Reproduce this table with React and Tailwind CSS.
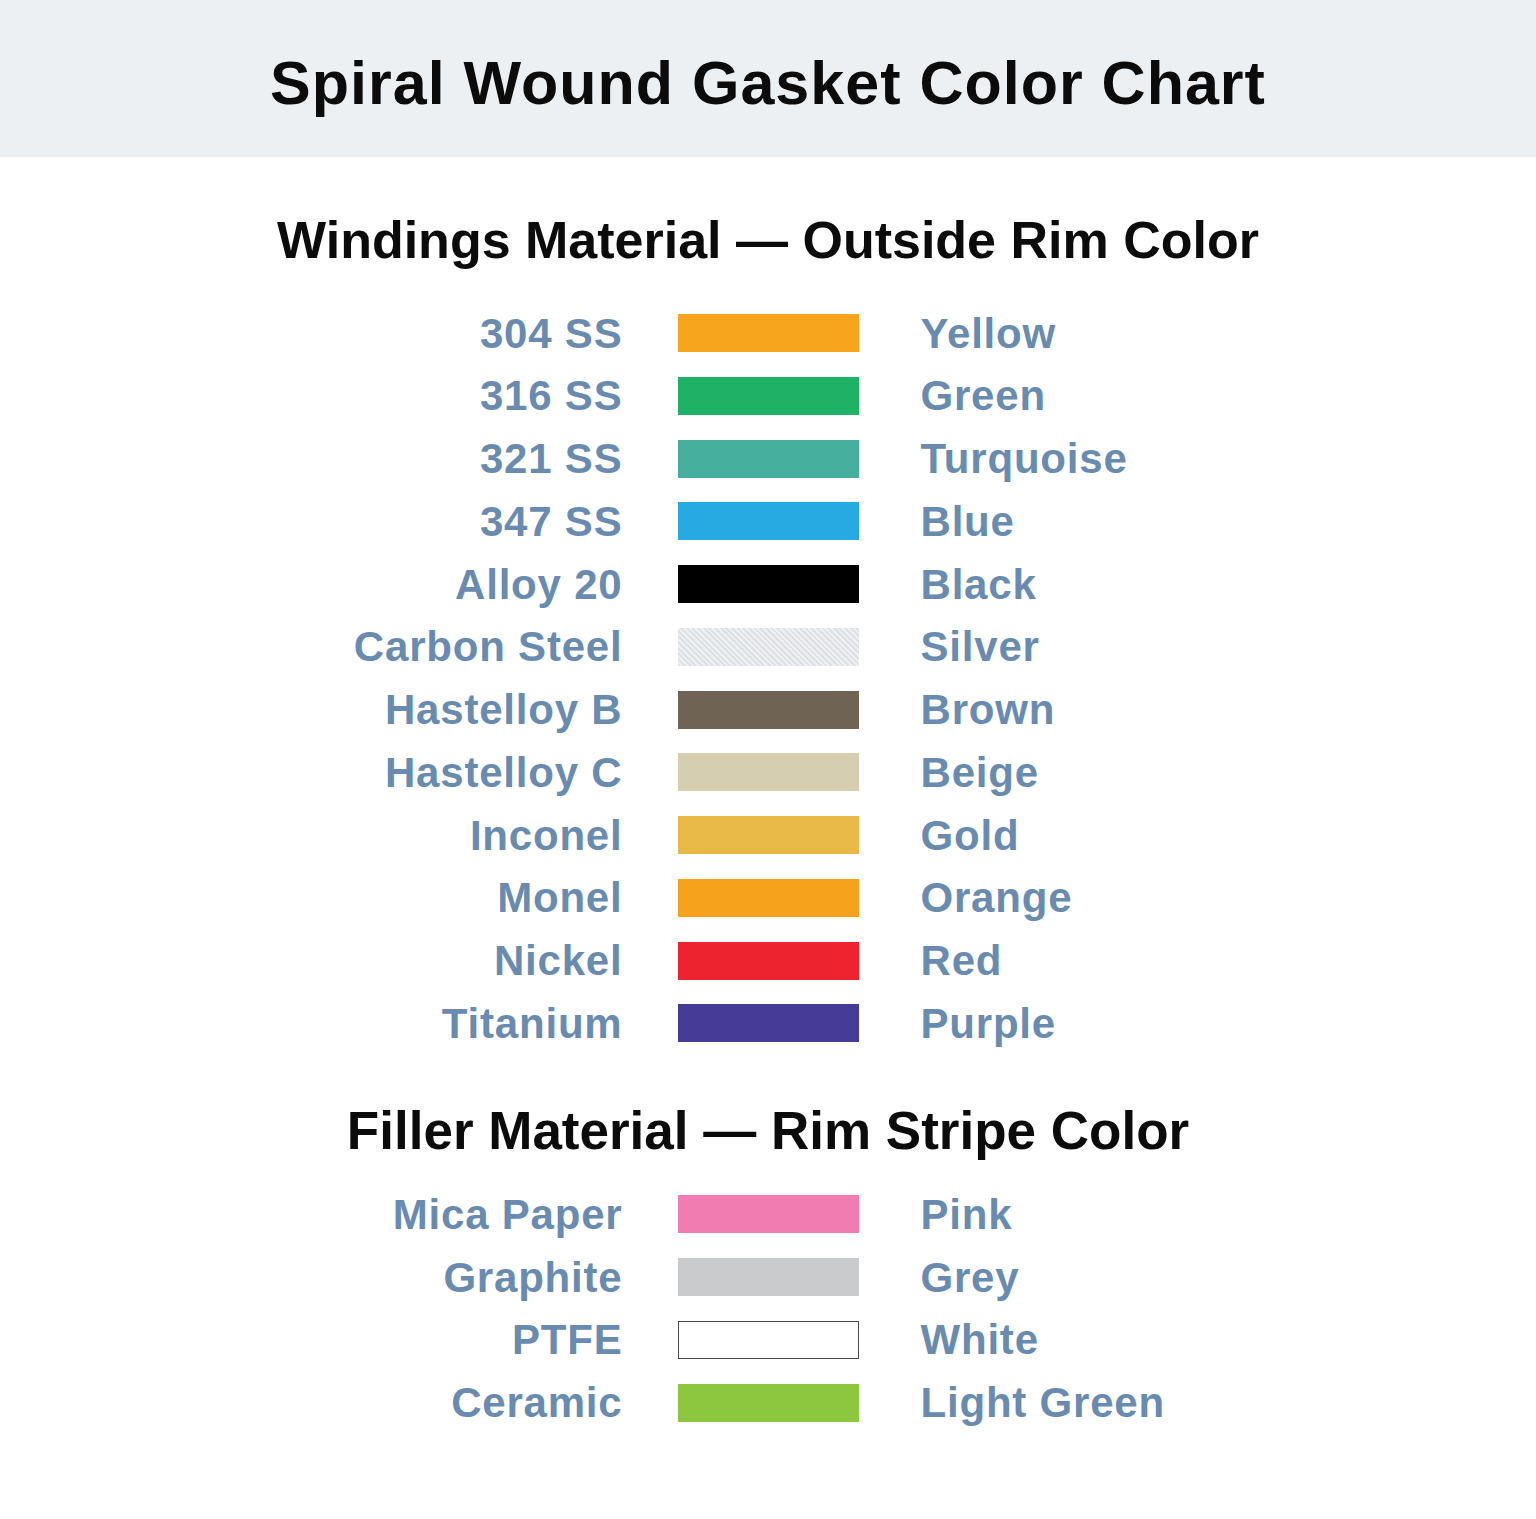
import React from 'react';

const windings = [
  { name: '304 SS', color: 'Yellow', swatch: 'bg-[#f7a51d]' },
  { name: '316 SS', color: 'Green', swatch: 'bg-[#1db265]' },
  { name: '321 SS', color: 'Turquoise', swatch: 'bg-[#45ae9c]' },
  { name: '347 SS', color: 'Blue', swatch: 'bg-[#27aae1]' },
  { name: 'Alloy 20', color: 'Black', swatch: 'bg-black' },
  { name: 'Carbon Steel', color: 'Silver', swatch: 'bg-[repeating-linear-gradient(45deg,#dde0e5_0px,#dde0e5_2px,#eef0f2_2px,#eef0f2_4px)]' },
  { name: 'Hastelloy B', color: 'Brown', swatch: 'bg-[#6f6454]' },
  { name: 'Hastelloy C', color: 'Beige', swatch: 'bg-[#d6ceb0]' },
  { name: 'Inconel', color: 'Gold', swatch: 'bg-[#e8b947]' },
  { name: 'Monel', color: 'Orange', swatch: 'bg-[#f7a21d]' },
  { name: 'Nickel', color: 'Red', swatch: 'bg-[#ed242f]' },
  { name: 'Titanium', color: 'Purple', swatch: 'bg-[#463c97]' },
];

const fillers = [
  { name: 'Mica Paper', color: 'Pink', swatch: 'bg-[#f17cb1]' },
  { name: 'Graphite', color: 'Grey', swatch: 'bg-[#cacbcd]' },
  { name: 'PTFE', color: 'White', swatch: 'bg-white border border-[#4a4a4a]' },
  { name: 'Ceramic', color: 'Light Green', swatch: 'bg-[#8dc63f]' },
];

function Row({ item }) {
  return (
    <div className="grid grid-cols-[1fr_181px_1fr] items-center h-[62.75px]">
      <span className="text-right pr-[55px] tracking-[0.8px]">{item.name}</span>
      <div className={`h-[38px] ${item.swatch}`} />
      <span className="pl-[62px] tracking-[0.8px]">{item.color}</span>
    </div>
  );
}

export default function App() {
  return (
    <div className="min-h-[1519px] bg-white font-['Liberation_Sans',Arial,sans-serif] font-bold">
      {/* Header */}
      <div className="h-[157px] bg-[#edf0f3] flex items-center justify-center pt-[10px]">
        <h1 className="text-[61px] leading-none text-[#0b0b0b] tracking-[1px]">Spiral Wound Gasket Color Chart</h1>
      </div>

      {/* Windings */}
      <h2 className="mt-[48px] h-[70px] flex items-center justify-center text-[52px] text-[#0b0b0b]">
        Windings Material — Outside Rim Color
      </h2>
      <div className="mt-[26.6px] text-[42px] text-[#6a8bb0]">
        {windings.map((w) => <Row key={w.name} item={w} />)}
      </div>

      {/* Filler */}
      <h2 className="mt-[41.6px] h-[70px] flex items-center justify-center text-[53px] text-[#0b0b0b]">
        Filler Material — Rim Stripe Color
      </h2>
      <div className="mt-[16.6px] text-[42px] text-[#6a8bb0]">
        {fillers.map((w) => <Row key={w.name} item={w} />)}
      </div>
    </div>
  );
}
